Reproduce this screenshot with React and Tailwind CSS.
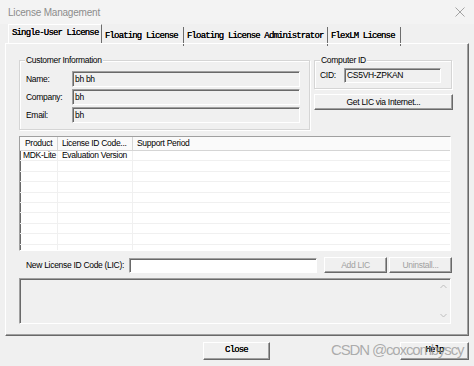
import React from 'react'

const ui = { fontFamily: '"Liberation Sans", Arial, sans-serif' }
const mono = { fontFamily: '"Liberation Mono", "Courier New", monospace' }

const sunken = 'border border-t-[#a0a0a0] border-l-[#a0a0a0] border-r-white border-b-white shadow-[inset_1px_1px_0_#696969]'
const raised = 'border border-t-white border-l-white border-r-[#696969] border-b-[#696969] shadow-[inset_-1px_-1px_0_#a0a0a0]'
const etched = 'border border-[#d5d5d5] shadow-[inset_1px_1px_0_white,1px_1px_0_white]'

function Group({ title, className, children }) {
  return (
    <div className={`relative ${etched} ${className}`}>
      <span className="absolute -top-[6px] left-[5px] bg-[#f0f0f0] px-[1px] leading-[11px]">{title}</span>
      {children}
    </div>
  )
}

function Field({ label, value }) {
  return (
    <div className="flex items-center h-[16px]">
      <span className="w-[46px]">{label}</span>
      <div className={`${sunken} w-[228px] h-[16px] flex items-center pl-[2px] bg-[#f0f0f0]`}>{value}</div>
    </div>
  )
}

function Tab({ label, active, width }) {
  return (
    <div
      className={`h-full flex items-center pl-[3px] border-r border-r-[#6d6d6d] ${active ? 'border-t border-l border-t-white border-l-white bg-[#f0f0f0]' : 'mt-[3px] h-[15px]'}`}
      style={{ width }}
    >
      <span style={mono} className="text-[9px] tracking-[-0.85px] text-black whitespace-nowrap [text-shadow:0_0_0.3px_#000]">{label}</span>
    </div>
  )
}

export default function App() {
  const rows = Array.from({ length: 10 })

  return (
    <div style={ui} className="relative w-[474px] h-[366px] bg-[#f0f0f0] text-[8.5px] tracking-[-0.3px] text-black overflow-hidden flex flex-col">
      {/* title bar */}
      <div className="h-[24px] flex items-center justify-between pl-[8px] pr-[8px] bg-[#f3f3f3]">
        <span className="text-[10px] tracking-[-0.2px] text-[#8c8c8c]">License Management</span>
        <svg width="10" height="10" viewBox="0 0 10 10" className="mr-[1px]">
          <path d="M0.5 0.5 L9.5 9.5 M9.5 0.5 L0.5 9.5" stroke="#9a9a9a" strokeWidth="0.9" />
        </svg>
      </div>

      {/* tabs */}
      <div className="h-[19px] flex items-end pl-[8px]">
        <div className="h-full flex items-start">
          <Tab label="Single-User License" active width={94} />
          <Tab label="Floating License" width={82} />
          <Tab label="Floating License Administrator" width={144} />
          <Tab label="FlexLM License" width={73} />
        </div>
      </div>

      {/* tab panel */}
      <div className="ml-[5px] w-[464px] h-[293px] border border-t-white border-l-white border-r-[#696969] border-b-[#696969] shadow-[inset_-1px_-1px_0_#a0a0a0] pl-[13px] flex flex-col">
        <div className="mt-[16px] flex items-start">
          <Group title="Customer Information" className="w-[291px] h-[70px] pt-[10px] pl-[6px] flex flex-col gap-[2px]">
            <Field label="Name:" value="bh bh" />
            <Field label="Company:" value="bh" />
            <Field label="Email:" value="bh" />
          </Group>

          <div className="ml-[4px] w-[139px] flex flex-col">
            <Group title="Computer ID" className="w-[138px] h-[29px] pt-[7px] pl-[5px] flex items-start">
              <span className="w-[24px] leading-[15px]">CID:</span>
              <div className={`${sunken} w-[97px] h-[15px] flex items-center pl-[2px]`}>CS5VH-ZPKAN</div>
            </Group>
            <div className={`${raised} mt-[5px] h-[16px] w-[139px] flex items-center justify-center`}>Get LIC via Internet...</div>
          </div>
        </div>

        {/* list view */}
        <div className={`${sunken} mt-[6px] w-[432px] h-[115px] bg-white overflow-hidden`}>
          <div className="h-[14px] flex bg-[#fafafa] border-b border-b-[#d5d5d5]">
            <div className="w-[38px] h-full flex items-center pl-[5px] border-r border-r-[#d5d5d5]">Product</div>
            <div className="w-[75px] h-full flex items-center pl-[4px] border-r border-r-[#d5d5d5]">License ID Code...</div>
            <div className="flex-1 h-full flex items-center pl-[4px]">Support Period</div>
          </div>
          {rows.map((_, i) => (
            <div key={i} className="h-[10.4px] flex border-b border-b-[#f0f0f0]">
              <div className="w-[38px] h-full flex items-center pl-[3px] border-r border-r-[#f0f0f0]">{i === 0 ? 'MDK-Lite' : ''}</div>
              <div className="w-[75px] h-full flex items-center pl-[4px] border-r border-r-[#f0f0f0]">{i === 0 ? 'Evaluation Version' : ''}</div>
              <div className="flex-1" />
            </div>
          ))}
        </div>

        {/* new LIC row */}
        <div className="mt-[6px] h-[16px] flex items-center">
          <span className="ml-[7px] w-[103px]">New License ID Code (LIC):</span>
          <div className={`${sunken} w-[188px] h-[15px] bg-white`} />
          <div className={`${raised} ml-[7px] w-[63px] h-[16px] flex items-center justify-center text-[#a0a0a0]`}>Add LIC</div>
          <div className={`${raised} ml-[2px] w-[63px] h-[16px] flex items-center justify-center text-[#a0a0a0]`}>Uninstall...</div>
        </div>

        {/* message box */}
        <div className={`${sunken} mt-[5px] w-[432px] h-[46px] flex justify-end`}>
          <div className="w-[14px] flex flex-col items-center justify-between py-[5px]">
            <svg width="7" height="5" viewBox="0 0 7 5">
              <path d="M0.5 4 L3.5 1 L6.5 4" stroke="#bdbdbd" fill="none" strokeWidth="1" />
            </svg>
            <svg width="7" height="5" viewBox="0 0 7 5">
              <path d="M0.5 1 L3.5 4 L6.5 1" stroke="#bdbdbd" fill="none" strokeWidth="1" />
            </svg>
          </div>
        </div>
      </div>

      {/* bottom buttons */}
      <div className="mt-[6px] h-[18px] flex items-center">
        <div className={`${raised} ml-[203px] w-[67px] h-[18px] flex items-center justify-center`}>
          <span style={mono} className="text-[9px] tracking-[-0.85px] [text-shadow:0_0_0.3px_#000]">Close</span>
        </div>
        <div className={`${raised} ml-[130px] w-[69px] h-[18px] flex items-center justify-center`}>
          <span style={mono} className="text-[9px] tracking-[-0.85px] [text-shadow:0_0_0.3px_#000]">Help</span>
        </div>
      </div>

      {/* watermark */}
      <span className="absolute left-[331px] top-[341px] text-[15px] leading-[18px] tracking-[-1.15px] text-[#9a9a9a]/80 whitespace-nowrap">CSDN @coxcombyscy</span>
    </div>
  )
}
